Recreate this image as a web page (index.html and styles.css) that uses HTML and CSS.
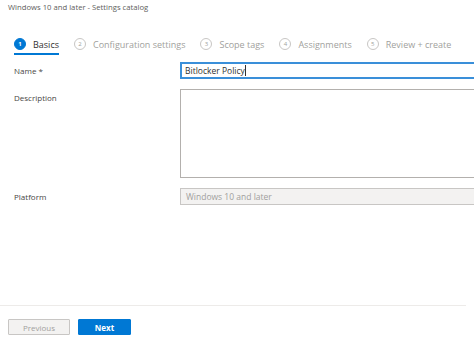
FILE: index.html
```html
<!DOCTYPE html>
<html lang="en">
<head>
    <meta charset="UTF-8">
    <meta name="viewport" content="width=device-width, initial-scale=1.0">
    <title>Settings catalog</title>
    <link rel="stylesheet" href="styles.css">
</head>
<body>
    <div class="page">
        <div class="crumb">Windows 10 and later - Settings catalog</div>

        <nav class="steps">
            <div class="step active"><span class="num">1</span><span class="step-label">Basics</span></div>
            <div class="step"><span class="num">2</span><span class="step-label">Configuration settings</span></div>
            <div class="step"><span class="num">3</span><span class="step-label">Scope tags</span></div>
            <div class="step"><span class="num">4</span><span class="step-label">Assignments</span></div>
            <div class="step"><span class="num">5</span><span class="step-label">Review + create</span></div>
        </nav>

        <div class="form">
            <div class="row">
                <div class="label">Name *</div>
                <div class="input focused">Bitlocker Policy<span class="caret"></span></div>
            </div>
            <div class="row">
                <div class="label">Description</div>
                <div class="input textarea"></div>
            </div>
            <div class="row">
                <div class="label">Platform</div>
                <div class="input disabled">Windows 10 and later</div>
            </div>
        </div>

        <div class="footer">
            <button class="btn">Previous</button>
            <button class="btn primary">Next</button>
        </div>
    </div>
</body>
</html>
```

FILE: styles.css
```css
body {
    margin: 0;
    background-color: white;
    font-family: "Open Sans", "Noto Sans", sans-serif;
    font-size: 8px;
    color: #323130;
    overflow: hidden;
}
.page {
    width: 474px;
    height: 346px;
    display: flex;
    flex-direction: column;
    overflow: hidden;
}
.crumb {
    height: 14px;
    line-height: 14px;
    padding-left: 8px;
    font-size: 7.7px;
    color: #605e5c;
}
.steps {
    display: flex;
    gap: 15px;
    margin-top: 21px;
    padding-left: 14px;
}
.step {
    display: flex;
    align-items: center;
    gap: 7px;
    height: 18px;
    border-bottom: 2px solid transparent;
    font-size: 9px;
    color: #a19f9d;
}
.step.active {
    border-bottom-color: #0078d4;
    color: #323130;
}
.num {
    width: 10px;
    height: 10px;
    border: 1px solid #c8c6c4;
    border-radius: 50%;
    display: flex;
    align-items: center;
    justify-content: center;
    font-size: 6px;
    line-height: 1;
}
.step.active .num {
    background-color: #0078d4;
    border-color: #0078d4;
    color: white;
    font-weight: bold;
}
.form {
    display: flex;
    flex-direction: column;
    gap: 10px;
    margin-top: 7px;
}
.row {
    display: flex;
    align-items: flex-start;
}
.label {
    width: 166px;
    padding-left: 14px;
    line-height: 17px;
    color: #484644;
}
.input {
    flex: 1;
    margin-right: -10px;
    height: 15px;
    line-height: 15px;
    padding-left: 4px;
    border: 1px solid #a19f9d;
    display: flex;
    align-items: center;
    font-size: 8.5px;
}
.input.focused {
    height: 13px;
    border: 2px solid #3a8fd9;
    padding-left: 3px;
}
.caret {
    width: 1px;
    height: 11px;
    background-color: #323130;
}
.input.textarea {
    height: 87px;
    border-color: #b3b0ad;
}
.input.disabled {
    background-color: #f3f2f1;
    border-color: #c8c6c4;
    color: #a19f9d;
    padding-left: 5px;
}
.footer {
    margin-top: auto;
    height: 41px;
    width: 466px;
    border-top: 1px solid #edebe9;
    display: flex;
    align-items: flex-start;
    gap: 8px;
    padding: 13px 0 0 8px;
    box-sizing: border-box;
}
.btn {
    height: 16px;
    padding: 0;
    font-family: inherit;
    font-size: 8px;
    border-radius: 1px;
    cursor: pointer;
}
.btn:first-child {
    width: 62px;
    background-color: #f3f2f1;
    border: 1px solid #c8c6c4;
    color: #a19f9d;
}
.btn.primary {
    width: 53px;
    background-color: #0078d4;
    border: 1px solid #0078d4;
    color: white;
    font-weight: bold;
}
```
